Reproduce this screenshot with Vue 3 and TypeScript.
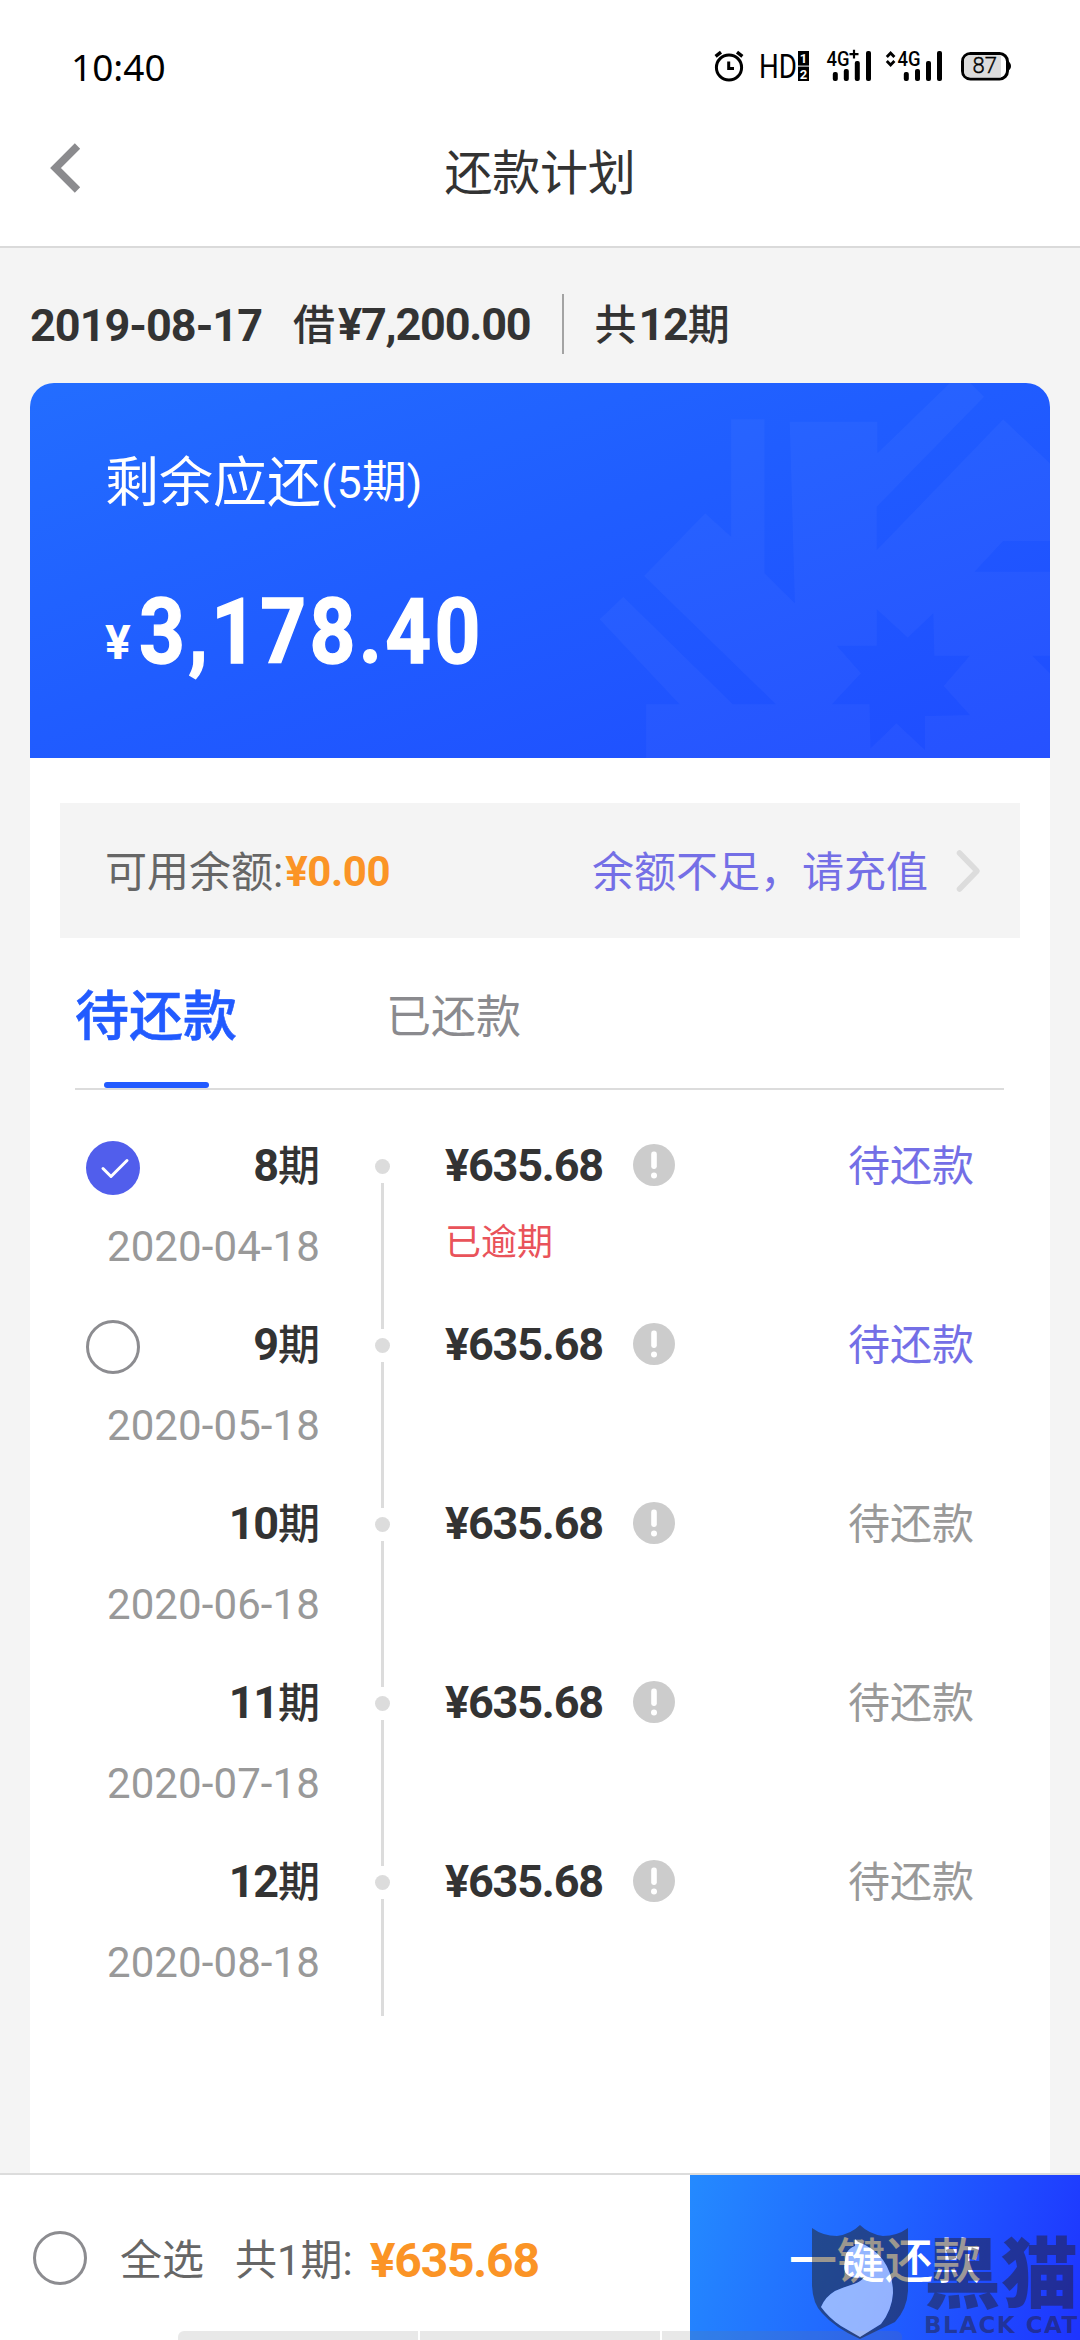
<script setup lang="ts">
interface Installment {
  term: number
  date: string
  amount: string
  payable: boolean
  checked?: boolean
  overdue?: boolean
}

const installments: Installment[] = [
  { term: 8, date: '2020-04-18', amount: '¥635.68', payable: true, checked: true, overdue: true },
  { term: 9, date: '2020-05-18', amount: '¥635.68', payable: true },
  { term: 10, date: '2020-06-18', amount: '¥635.68', payable: false },
  { term: 11, date: '2020-07-18', amount: '¥635.68', payable: false },
  { term: 12, date: '2020-08-18', amount: '¥635.68', payable: false },
]
</script>

<template>
  <div class="page">
    <div class="status-bar">
      <span class="clock">10:40</span>
      <svg class="status-icons" width="300" height="36" viewBox="712 48 300 36">
        <!-- alarm -->
        <g fill="none" stroke="#000" stroke-width="3">
          <circle cx="729" cy="67.5" r="12.6" />
          <path d="M728.7 61.5V68.5H734" />
          <path d="M715.6 56.4L721 52.2M737 52.2L742.4 56.4" stroke-width="3.4" />
        </g>
        <!-- HD 1/2 -->
        <text x="759" y="78" font-size="34" textLength="38" lengthAdjust="spacingAndGlyphs">HD</text>
        <rect x="798" y="51" width="11" height="14.6" />
        <rect x="798" y="66.6" width="11" height="14.4" />
        <text x="803.5" y="63" font-size="13" font-weight="700" fill="#fff" text-anchor="middle">1</text>
        <text x="803.5" y="78.6" font-size="13" font-weight="700" fill="#fff" text-anchor="middle">2</text>
        <!-- first signal -->
        <text x="826.5" y="66" font-size="20" font-weight="500" textLength="23" lengthAdjust="spacingAndGlyphs">4G</text>
        <path d="M849.5 54.2H858.5M854 49.8V58.6" stroke="#000" stroke-width="2.2" />
        <g>
          <rect x="832.8" y="72" width="5" height="9" rx="2" />
          <rect x="843.8" y="69" width="5" height="12" rx="2" />
          <rect x="854.8" y="61" width="5" height="20" rx="2" />
          <rect x="866" y="51" width="5" height="30" rx="2" />
        </g>
        <!-- second signal -->
        <path d="M886.8 57L890.6 53L894.4 57M886.8 61L890.6 65L894.4 61" fill="none" stroke="#000" stroke-width="2.8" />
        <text x="897.5" y="66" font-size="20" font-weight="500" textLength="23" lengthAdjust="spacingAndGlyphs">4G</text>
        <g>
          <rect x="903.8" y="72" width="5" height="9" rx="2" />
          <rect x="915" y="69" width="5" height="12" rx="2" />
          <rect x="926" y="61" width="5" height="20" rx="2" />
          <rect x="937" y="51" width="5" height="30" rx="2" />
        </g>
        <!-- battery -->
        <path d="M1006 60Q1011 62 1011 66Q1011 70 1006 72Z" />
        <rect x="962.5" y="53.5" width="45" height="25.5" rx="8" fill="#fff" stroke="#000" stroke-width="3" />
        <path d="M970.5 55H1001V77.5H970.5Q964 77.5 964 71V61.5Q964 55 970.5 55Z" fill="#dcdcdc" />
        <text x="984.8" y="73.2" font-size="22" font-weight="300" text-anchor="middle" stroke="#000" stroke-width=".4">87</text>
      </svg>
    </div>

    <header class="nav">
      <svg class="back" width="34" height="52" viewBox="0 0 34 52">
        <path d="M28.5 4L6.5 26L28.5 48" fill="none" stroke="#8b8b8e" stroke-width="7.6" />
      </svg>
      <h1>还款计划</h1>
    </header>

    <section class="summary">
      <span class="num day">2019-08-17</span>
      <span class="loan">借<b class="num">¥7,200.00</b></span>
      <i class="divider"></i>
      <span class="total">共<b class="num">12</b>期</span>
    </section>

    <main class="card">
      <section class="hero">
        <svg class="pattern" width="510" height="375" viewBox="0 39 1481 1125" preserveAspectRatio="none">
          <path
            fill="#fff"
            fill-opacity=".03"
            fill-rule="evenodd"
            d="M308 1164V1003H405L173 748L242 680L560 1003H685L302 618L480 430L555 500V148H652V610L740 700L725 155H980V250L1190 39H1250L1290 80L978 410V540L1345 148L1481 280V513H1345L1262 605H1481V857H1430L1481 910V1164ZM978 718V827H862L932 910L848 1003H957L960 1135L1035 1060L1118 1140V1038L1248 1035L1172 948L1248 857H1145L1142 730L1068 803Z"
          />
        </svg>
        <p class="hero-title">剩余应还<small>(5期)</small></p>
        <p class="hero-amount"><span class="yen">¥</span><span class="digits">3,178.40</span></p>
      </section>

      <section class="balance">
        <span class="balance-label">可用余额:</span>
        <b class="num balance-value">¥0.00</b>
        <span class="recharge">余额不足，请充值</span>
        <svg width="30" height="50" viewBox="0 0 30 50">
          <path d="M5.5 7L23 25L5.5 43" fill="none" stroke="#dcdcdc" stroke-width="5.5" stroke-linecap="round" stroke-linejoin="round" />
        </svg>
      </section>

      <nav class="tabs">
        <div class="tab active"><span>待还款</span><i></i></div>
        <div class="tab"><span>已还款</span></div>
      </nav>

      <ul class="plan">
        <li v-for="(item, index) in installments" :key="item.term">
          <div class="when">
            <div class="when-head">
              <svg v-if="item.checked" class="check" width="54" height="54" viewBox="0 0 54 54">
                <circle cx="27" cy="27" r="27" fill="#515eec" />
                <path d="M17 27.5L25 35.5L41 19.5" fill="none" stroke="#fff" stroke-width="3" stroke-linecap="round" stroke-linejoin="round" />
              </svg>
              <i v-else-if="item.payable" class="circle check"></i>
              <span class="term"><b class="num">{{ item.term }}</b>期</span>
            </div>
            <div class="date">{{ item.date }}</div>
          </div>
          <div class="rail">
            <i class="seg upper" :class="{ hidden: index === 0 }"></i>
            <i class="dot"></i>
            <i class="seg lower" :class="{ last: index === installments.length - 1 }"></i>
          </div>
          <div class="pay">
            <div class="pay-head">
              <b class="num">{{ item.amount }}</b>
              <svg width="42" height="42" viewBox="0 0 42 42">
                <circle cx="21" cy="21" r="21" fill="#ccc" />
                <rect x="18.2" y="7.5" width="5.6" height="17.5" rx="2.4" fill="#fff" />
                <circle cx="21" cy="31.5" r="3" fill="#fff" />
              </svg>
            </div>
            <div v-if="item.overdue" class="overdue">已逾期</div>
          </div>
          <div class="state" :class="{ payable: item.payable }">待还款</div>
        </li>
      </ul>
    </main>

    <footer class="bottom-bar">
      <i class="circle"></i>
      <span class="all">全选</span>
      <span class="count">共1期:</span>
      <b class="num sum">¥635.68</b>
      <button type="button">一键还款</button>
    </footer>

    <div class="gesture">
      <i></i><i></i><i></i>
    </div>

    <div class="watermark">
      <svg width="98" height="116" viewBox="0 0 98 116">
        <path
          fill="#241c0a"
          fill-opacity=".457"
          fill-rule="evenodd"
          d="M1 3Q12 11 26 11Q40 9 49 0Q58 9 72 11Q86 11 97 3V66Q96 84 84 97L49 114Q24 103 11 88Q1 78 1 58Z
             M44 14L47 17Q62 22 72 35Q82 49 82 68Q81 85 70 99L49 112L30 101Q18 93 10 82Q14 72 24 66Q33 62 43 59Q51 56 53 52Q42 54 37 50Q33 47 33 42L35 29Q38 23 44 21Z"
        />
        <path
          fill="#fff"
          fill-opacity=".52"
          d="M44 14L47 17Q62 22 72 35Q82 49 82 68Q81 85 70 99L49 112L30 101Q18 93 10 82Q14 72 24 66Q33 62 43 59Q51 56 53 52Q42 54 37 50Q33 47 33 42L35 29Q38 23 44 21Z"
        />
      </svg>
      <div class="mark-text">
        <span class="mark-cn">黑猫</span>
        <span class="mark-en">BLACK CAT</span>
      </div>
    </div>
  </div>
</template>

<style>
body {
  margin: 0;
}
</style>

<style scoped>
.page {
  position: relative;
  display: flex;
  flex-direction: column;
  width: 1080px;
  height: 2340px;
  overflow: hidden;
  background: #f4f4f4;
  color: #333;
  font-family: Roboto, 'Noto Sans CJK SC', sans-serif;
  font-size: 42px;
}
p, h1, ul {
  margin: 0;
  padding: 0;
  font-weight: 400;
}
svg {
  display: block;
  flex: none;
}
.num {
  font-size: 45px;
  font-weight: 700;
  letter-spacing: -1.2px;
}

.status-bar {
  display: flex;
  align-items: flex-start;
  justify-content: space-between;
  box-sizing: border-box;
  height: 90px;
  padding: 48px 68px 0 71px;
  background: #fff;
  color: #000;
}
.clock {
  font: 37px/38px 'Noto Sans', sans-serif;
}

.nav {
  display: grid;
  grid-template-columns: 120px 1fr 120px;
  align-items: center;
  box-sizing: border-box;
  height: 158px;
  border-bottom: 2px solid #dadada;
  background: #fff;
}
.back {
  margin: 0 0 0 49px;
}
.nav h1 {
  padding-top: 12px;
  font-size: 48px;
  line-height: 60px;
  text-align: center;
  letter-spacing: -.3px;
}

.summary {
  display: flex;
  align-items: center;
  box-sizing: border-box;
  height: 135px;
  padding: 20px 0 0 30px;
  line-height: 60px;
  font-weight: 500;
  white-space: nowrap;
}
.summary .day {
  letter-spacing: -1px;
}
.loan {
  margin-left: 31px;
}
.loan .num {
  margin-left: 3px;
}
.divider {
  width: 2px;
  height: 60px;
  margin: -4px 30px 0 32px;
  background: #a3a3a3;
}
.total .num {
  margin-left: 2px;
}

.card {
  display: flex;
  flex: 1;
  flex-direction: column;
  min-height: 0;
  margin: 0 30px;
  overflow: hidden;
  border-radius: 24px 24px 0 0;
  background: #fff;
}
.hero {
  position: relative;
  flex: none;
  box-sizing: border-box;
  height: 375px;
  padding: 70px 75px 0;
  background: linear-gradient(160deg, #236dff 0%, #205dff 45%, #1f4cff 100%);
  color: #fff;
}
.pattern {
  position: absolute;
  top: 0;
  right: 0;
}
.hero-title {
  font-size: 54px;
  line-height: 62px;
}
.hero-title small {
  font-size: 45px;
  line-height: 1;
  vertical-align: 4px;
}
.hero-amount {
  display: flex;
  margin-top: 67px;
  font-size: 91px;
  font-weight: 700;
  line-height: 100px;
}
.yen {
  width: 34px;
  padding-top: 11px;
  font-size: 48px;
}
.digits {
  letter-spacing: 3.7px;
  transform: scaleX(.88);
  transform-origin: left;
  -webkit-text-stroke: 1.4px #fff;
}

.balance {
  display: flex;
  flex: none;
  align-items: center;
  height: 135px;
  margin: 45px 30px 0;
  padding: 0 36px 0 45px;
  background: #f4f4f4;
  line-height: 60px;
}
.balance-label {
  padding-top: 4px;
  color: #666;
}
.balance-value {
  margin-left: 2px;
  padding-top: 3px;
  font-size: 42px;
  letter-spacing: -.4px;
  color: #fb9426;
}
.recharge {
  margin: 0 26px 0 auto;
  padding-top: 4px;
  color: #746fe6;
}

.tabs {
  display: flex;
  flex: none;
  height: 150px;
  margin: 0 46px 0 45px;
  border-bottom: 2px solid #dcdcdc;
}
.tab {
  display: flex;
  flex-direction: column;
  align-items: center;
  width: 162px;
  padding-top: 50px;
  color: #8a8a8e;
  font-size: 45px;
  line-height: 60px;
}
.tab.active {
  margin-right: 140px;
  color: #225bff;
  font-size: 54px;
  font-weight: 500;
  -webkit-text-stroke: .5px #225bff;
}
.tab:not(.active) {
  width: auto;
  margin-left: 9px;
}
.tab i {
  width: 105px;
  height: 6px;
  margin-top: 34px;
  border-radius: 3px;
  background: #225bff;
}

.plan {
  flex: none;
  margin-left: 45px;
  padding-right: 76px;
  list-style: none;
}
.plan li {
  display: grid;
  grid-template-columns: 245px 125px 1fr auto;
  grid-template-rows: 179px;
}
.when-head {
  display: flex;
  align-items: center;
  height: 60px;
  padding: 46px 0 0 11px;
}
.check {
  margin-top: 4px;
}
.term {
  margin-left: auto;
  font-weight: 500;
  line-height: 60px;
}
.date {
  margin-top: 21px;
  color: #999;
  line-height: 60px;
  text-align: right;
  letter-spacing: .1px;
}
.circle {
  box-sizing: border-box;
  width: 54px;
  height: 54px;
  border: 3px solid #8c8c90;
  border-radius: 50%;
}
.rail {
  display: flex;
  flex-direction: column;
  align-items: center;
}
.seg {
  width: 3px;
  background: #dcdcdc;
}
.seg.upper {
  height: 60px;
}
.seg.upper.hidden {
  background: transparent;
}
.seg.lower {
  flex: 1;
}
.seg.lower.last {
  margin-bottom: -31px;
}
.dot {
  width: 15px;
  height: 15px;
  margin: 9px 0;
  border-radius: 50%;
  background: #dcdcdc;
}
.pay-head {
  display: flex;
  align-items: center;
  height: 60px;
  padding-top: 45px;
}
.pay-head .num {
  width: 188px;
}
.overdue {
  padding-top: 18px;
  color: #e9535a;
  font-size: 36px;
  line-height: 60px;
}
.state {
  padding-top: 47px;
  color: #999;
  line-height: 60px;
}
.state.payable {
  color: #746fe6;
}

.bottom-bar {
  display: flex;
  flex: none;
  align-items: center;
  box-sizing: border-box;
  height: 167px;
  padding-left: 33px;
  border-top: 2px solid #dcdcdc;
  background: #fff;
  color: #666;
  line-height: 60px;
}
.all {
  margin-left: 33px;
  padding-top: 6px;
}
.count {
  margin-left: 31px;
  padding-top: 6px;
}
.sum {
  margin-left: 17px;
  padding-top: 6px;
  color: #fb9426;
  font-size: 48px;
}
.bottom-bar button {
  width: 390px;
  height: 165px;
  margin-left: auto;
  padding: 8px 0 0;
  border: 0;
  background: linear-gradient(105deg, #248aff 0%, #2062ff 50%, #1e34ff 100%);
  color: #fff;
  font: 500 48px/60px Roboto, 'Noto Sans CJK SC', sans-serif;
}

.gesture {
  position: absolute;
  bottom: 0;
  left: 178px;
  display: flex;
  gap: 2px;
}
.gesture i {
  width: 240px;
  height: 9px;
  background: rgba(120, 120, 120, .17);
}
.gesture i:first-child {
  border-top-left-radius: 6px;
}
.gesture i:last-child {
  border-top-right-radius: 6px;
}

.watermark {
  position: absolute;
  top: 2225px;
  left: 811px;
  display: flex;
  gap: 15px;
  color: rgba(36, 28, 30, .46);
}
.mark-text {
  display: flex;
  flex-direction: column;
  white-space: nowrap;
}
.mark-cn {
  font: 900 77px/88px 'Noto Sans CJK SC', sans-serif;
}
.mark-en {
  font: 700 23px/24px 'DejaVu Sans', sans-serif;
  letter-spacing: 1.5px;
}
</style>
